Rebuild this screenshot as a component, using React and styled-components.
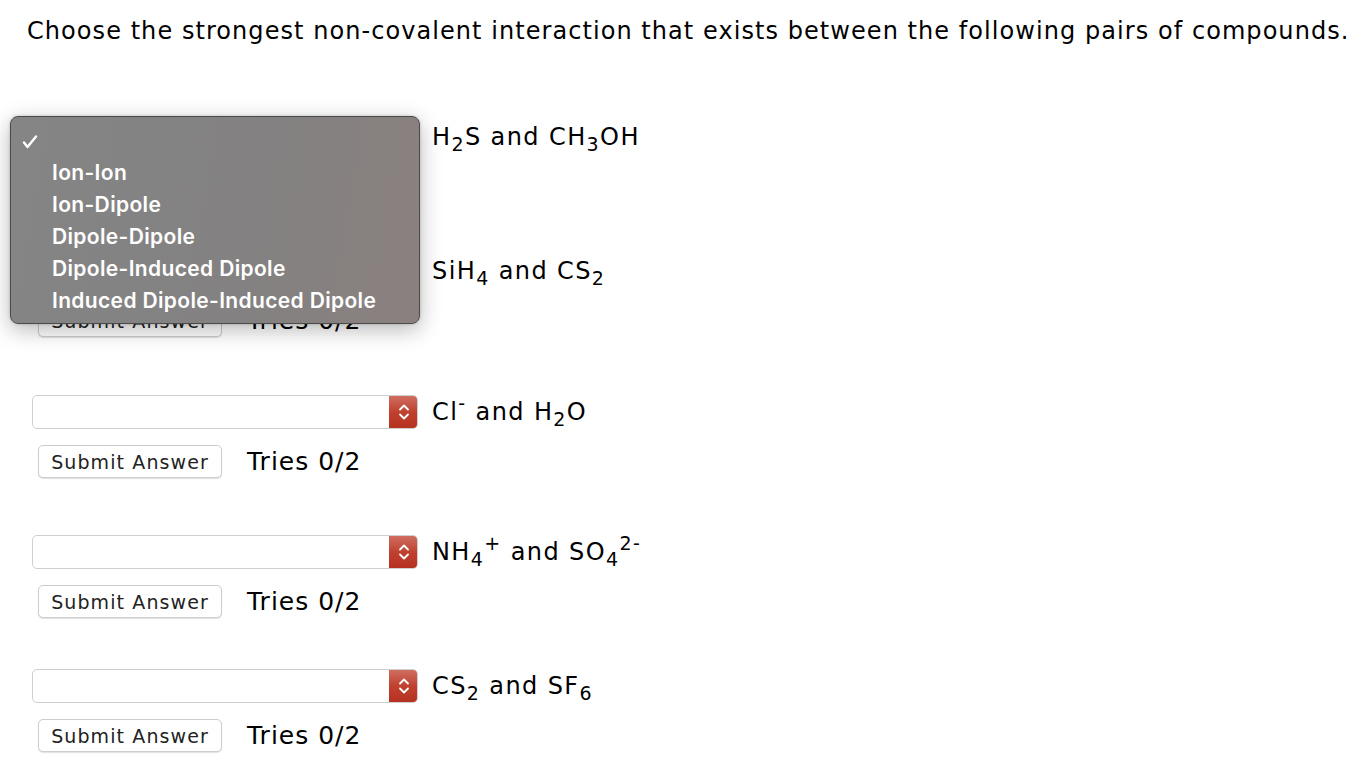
import React from 'react';
import styled, { createGlobalStyle } from 'styled-components';

const GlobalStyle = createGlobalStyle`
  body {
    margin: 0;
    background: #ffffff;
    color: #000000;
    font-family: "DejaVu Sans", Verdana, sans-serif;
  }
`;

const Page = styled.div`
  position: relative;
  padding: 16px 0 0 27px;
  width: 1368px;
  height: 768px;
  box-sizing: border-box;
  overflow: hidden;
`;

const Heading = styled.p`
  margin: 0;
  font-size: 24px;
  line-height: 30px;
  letter-spacing: 1.06px;
`;

const QuestionList = styled.div`
  display: flex;
  flex-direction: column;
  margin-top: 74px;
  margin-left: 5px;
`;

const Question = styled.div`
  display: flex;
  flex-direction: column;
  gap: 16px;
  margin-top: ${p => p.$space}px;
`;

const SelectLine = styled.div`
  display: flex;
  align-items: center;
  gap: 14px;
  height: 34px;
`;

const SelectBox = styled.div`
  display: flex;
  width: 386px;
  height: 34px;
  box-sizing: border-box;
  border: 1px solid #cfcfcf;
  border-radius: 5px;
  background: #ffffff;
  overflow: hidden;
`;

const SelectValue = styled.div`
  flex: 1;
`;

const SelectArrow = styled.div`
  width: 29px;
  margin: -1px -1px -1px 0;
  display: flex;
  align-items: center;
  justify-content: center;
  background: linear-gradient(#cf7163, #c0412f 50%, #b5301f);
  border-radius: 0 5px 5px 0;
`;

const Compound = styled.span`
  font-size: 24px;
  line-height: 30px;
  letter-spacing: 1.4px;
  white-space: nowrap;

  sub, sup {
    font-size: 19px;
    line-height: 0;
  }
  sub {
    vertical-align: -6px;
  }
  sup {
    vertical-align: 10px;
  }
`;

const ActionLine = styled.div`
  display: flex;
  align-items: center;
  gap: 25px;
  margin-left: 6px;
  height: 33px;
`;

const SubmitButton = styled.button`
  width: 184px;
  height: 33px;
  padding: 0;
  border: 1px solid #cdcdcd;
  border-radius: 5px;
  background: #ffffff;
  box-shadow: 0 1px 1px rgba(0, 0, 0, 0.12);
  font-family: "DejaVu Sans", Verdana, sans-serif;
  font-size: 19px;
  letter-spacing: 1.1px;
  color: #222222;
`;

const Tries = styled.span`
  font-size: 25px;
  letter-spacing: 1px;
`;

const Menu = styled.div`
  position: absolute;
  left: 10px;
  top: 116px;
  width: 410px;
  height: 208px;
  box-sizing: border-box;
  padding: 8px 0 0 0;
  border: 1px solid #4a4a4a;
  border-radius: 8px;
  background: linear-gradient(100deg, #858585, #838181 60%, #8a817f);
  box-shadow: 0 6px 22px rgba(0, 0, 0, 0.28), 0 0 3px rgba(0, 0, 0, 0.2);
`;

const MenuItem = styled.div`
  position: relative;
  height: 32px;
  line-height: 32px;
  padding-left: 41px;
  font-family: Inter, "Liberation Sans", sans-serif;
  font-weight: 600;
  font-size: 21px;
  letter-spacing: 0.35px;
  color: #ffffff;
  white-space: nowrap;
`;

const Check = styled.svg`
  position: absolute;
  left: 11px;
  top: 10px;
`;

const Chevrons = () => (
  <svg width="12" height="20" viewBox="0 0 12 20" fill="none">
    <path d="M2 7.5 L6 3.5 L10 7.5" stroke="#ffffff" strokeWidth="1.8" strokeLinecap="round" strokeLinejoin="round" />
    <path d="M2 12.5 L6 16.5 L10 12.5" stroke="#ffffff" strokeWidth="1.8" strokeLinecap="round" strokeLinejoin="round" />
  </svg>
);

const pairs = [
  { space: 0, label: <>H<sub>2</sub>S and CH<sub>3</sub>OH</> },
  { space: 51, label: <>SiH<sub>4</sub> and CS<sub>2</sub></> },
  { space: 58, label: <>Cl<sup>-</sup> and H<sub>2</sub>O</> },
  { space: 57, label: <>NH<sub>4</sub><sup>+</sup> and SO<sub>4</sub><sup>2-</sup></> },
  { space: 51, label: <>CS<sub>2</sub> and SF<sub>6</sub></> },
];

const options = [
  'Ion-Ion',
  'Ion-Dipole',
  'Dipole-Dipole',
  'Dipole-Induced Dipole',
  'Induced Dipole-Induced Dipole',
];

export default function App() {
  return (
    <Page>
      <GlobalStyle />
      <Heading>
        Choose the strongest non-covalent interaction that exists between the following pairs of compounds.
      </Heading>
      <QuestionList>
        {pairs.map((pair, i) => (
          <Question key={i} $space={pair.space}>
            <SelectLine>
              <SelectBox>
                <SelectValue />
                <SelectArrow>
                  <Chevrons />
                </SelectArrow>
              </SelectBox>
              <Compound>{pair.label}</Compound>
            </SelectLine>
            <ActionLine>
              <SubmitButton>Submit Answer</SubmitButton>
              <Tries>Tries 0/2</Tries>
            </ActionLine>
          </Question>
        ))}
      </QuestionList>

      <Menu>
        <MenuItem>
          <Check width="16" height="14" viewBox="0 0 16 14" fill="none">
            <path d="M2 7.5 L5.5 12 L14 1.5" stroke="#ffffff" strokeWidth="2.4" strokeLinecap="round" strokeLinejoin="round" />
          </Check>
        </MenuItem>
        {options.map(o => (
          <MenuItem key={o}>{o}</MenuItem>
        ))}
      </Menu>
    </Page>
  );
}
